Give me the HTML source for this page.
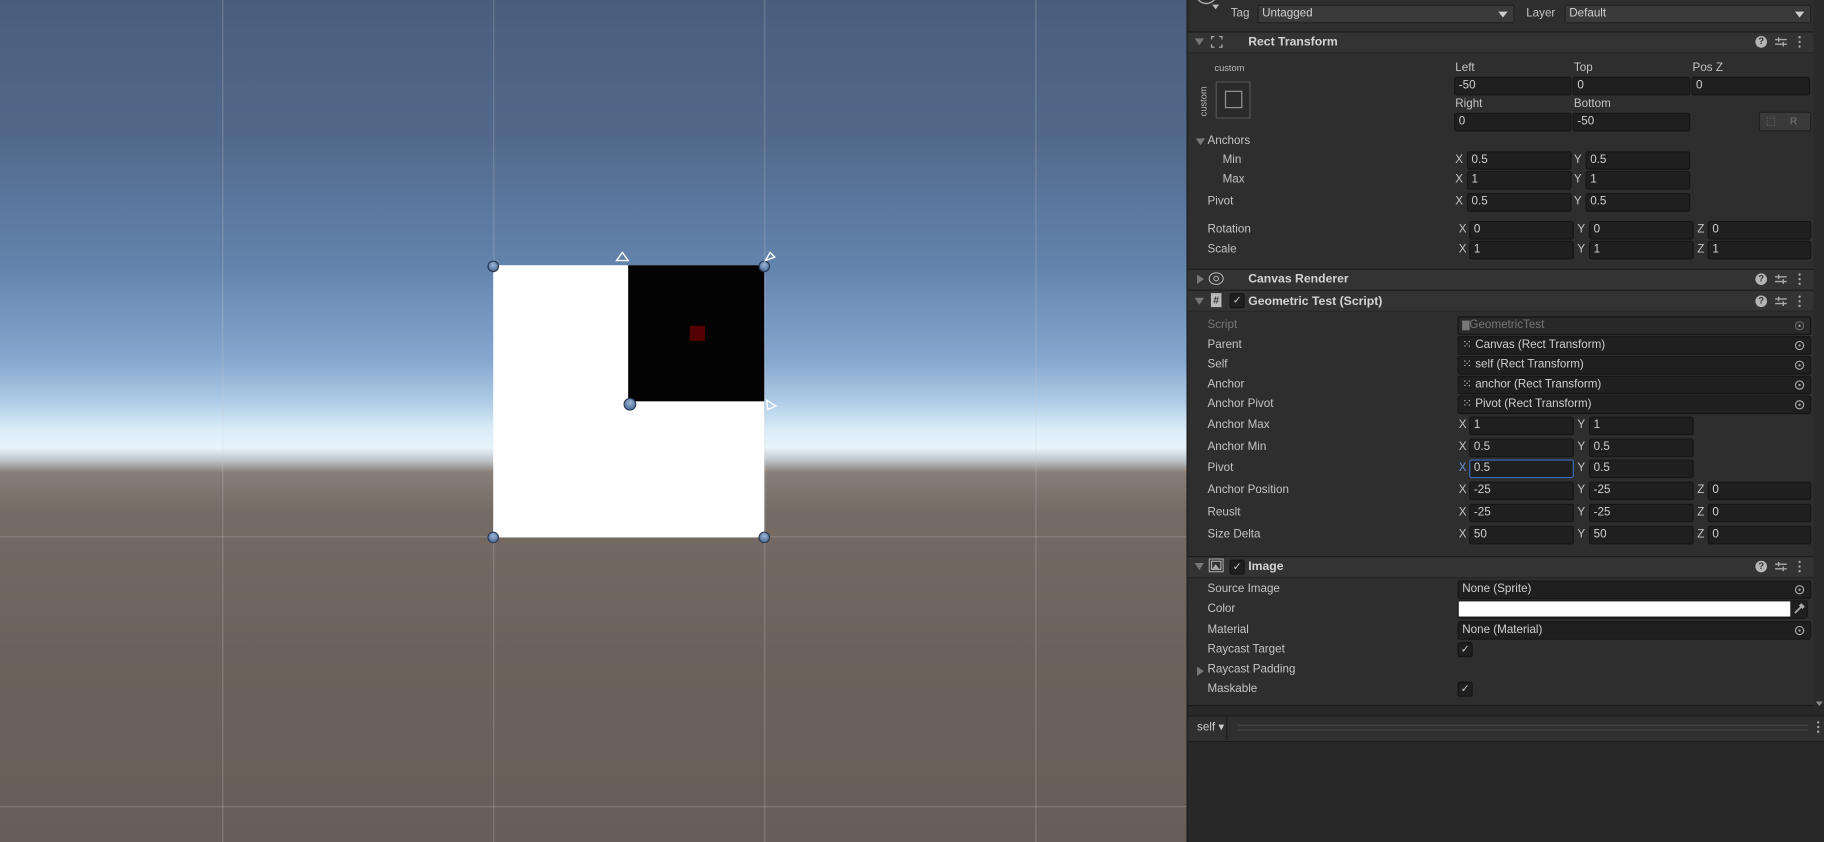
<!DOCTYPE html>
<html><head><meta charset="utf-8"><style>
html,body{margin:0;padding:0;width:1824px;height:842px;overflow:hidden;background:#282828}
#w{position:absolute;left:0;top:0;width:1568px;height:724px;transform:scale(1.16327);transform-origin:0 0;font-family:"Liberation Sans",sans-serif;font-size:10px;color:#c4c4c4}
.a{position:absolute}
.sky{left:0;top:0;width:1020px;height:724px;background:linear-gradient(#4a5d7d 0px,#52698b 120px,#6384ad 230px,#86a8cf 310px,#aecbe6 345px,#dceef9 370px,#e8f3fb 385px,#bcc4c9 396px,#8a7f78 406px,#766b64 440px,#6d625b 560px,#695e57 724px)}
.vl{width:1px;top:0;height:724px;background:rgba(200,200,200,.28)}
.hl{height:1px;left:0;width:1020px;background:rgba(200,200,200,.28)}
.h{border-radius:50%;width:8px;height:8px;background:radial-gradient(circle at 50% 35%,#9cb6d8,#3b5b86);border:1px solid #2a3a55;margin:-5px 0 0 -5px}
.ins{left:1020px;top:0;width:548px;height:724px;background:#282828;border-left:1px solid #1a1a1a}
.pan{left:1021px;top:0;width:538px;height:606px;background:#2e2e2e}
.hd{left:1021px;width:538px;height:17px;background:#333;border-top:1px solid #1c1c1c;border-bottom:1px solid #262626}
.ht{font-weight:bold;color:#d4d4d4;font-size:10.5px;line-height:14px}
.l{line-height:14px}
.f{height:14px;background:#1f1f1f;border:1px solid #161616;border-radius:2px;color:#d0d0d0;line-height:14px;padding-left:3px;box-sizing:content-box}
.tg{width:8px;height:8px;border:1.5px solid #aaa;border-radius:50%;box-sizing:border-box}
.tg:after{content:"";position:absolute;left:1.5px;top:1.5px;width:2px;height:2px;background:#aaa;border-radius:50%}
.cb{width:11px;height:11px;background:#1f1f1f;border:1px solid #141414;border-radius:2px;color:#ccc;font-size:9px;line-height:11px;text-align:center}
.tri{width:0;height:0;border-left:4px solid transparent;border-right:4px solid transparent;border-top:6px solid #777}
.trr{width:0;height:0;border-top:4px solid transparent;border-bottom:4px solid transparent;border-left:6px solid #777}
.q{width:10px;height:10px;border-radius:50%;background:#b4b4b4;color:#333;font-size:8px;font-weight:bold;line-height:10px;text-align:center}
</style></head><body><div id="w">
<div class="a sky"></div>
<div class="a vl" style="left:191px"></div><div class="a vl" style="left:424px"></div><div class="a vl" style="left:657px"></div><div class="a vl" style="left:890px"></div>
<div class="a hl" style="top:461px"></div><div class="a hl" style="top:693px"></div>
<div class="a" style="left:424px;top:228px;width:233px;height:234px;background:#fff"></div>
<div class="a" style="left:540px;top:228px;width:117px;height:117px;background:#030303"></div>
<div class="a" style="left:593px;top:280px;width:13px;height:13px;background:#540000"></div>
<div class="a h" style="left:424px;top:229px"></div><div class="a h" style="left:657px;top:229px"></div>
<div class="a h" style="left:424px;top:462px"></div><div class="a h" style="left:657px;top:462px"></div>
<div class="a h" style="left:541px;top:347px;width:9px;height:9px"></div>
<svg class="a" style="left:528px;top:215px" width="14" height="12"><path d="M2 9 L7 2 L12 9 Z" fill="none" stroke="#fff" stroke-width="1.2"/></svg>
<svg class="a" style="left:655px;top:215px" width="14" height="14"><path d="M3 9 L7 2 L11 6 Z" fill="none" stroke="#fff" stroke-width="1.2"/></svg>
<svg class="a" style="left:656px;top:341px" width="14" height="14"><path d="M3 3 L11 8 L4 11 Z" fill="none" stroke="#fff" stroke-width="1.2"/></svg>

<div class="a ins"></div>
<div class="a pan"></div>
<div class="a" style="left:1559px;top:0;width:9px;height:606px;background:#2a2a2a"></div>
<div class="a" style="left:1561px;top:603px;border-left:3px solid transparent;border-right:3px solid transparent;border-top:4px solid #888"></div>
<svg class="a" style="left:1028px;top:0" width="26" height="10"><path d="M2 0 Q9 6 16 0" fill="none" stroke="#aaa" stroke-width="1.2"/><path d="M14 4 L20 4 L17 8 Z" fill="#bbb"/></svg>
<!-- tag row -->
<div class="a l" style="left:1058px;top:5px">Tag</div>
<div class="a f" style="left:1081px;top:4px;width:216px;background:#3a3a3a;border-color:#222">Untagged</div>
<div class="a" style="left:1288px;top:10px;border-left:4px solid transparent;border-right:4px solid transparent;border-top:5px solid #ccc"></div>
<div class="a l" style="left:1312px;top:5px">Layer</div>
<div class="a f" style="left:1345px;top:4px;width:207px;background:#3a3a3a;border-color:#222">Default</div>
<div class="a" style="left:1543px;top:10px;border-left:4px solid transparent;border-right:4px solid transparent;border-top:5px solid #ccc"></div>

<!-- Rect transform header -->
<div class="a hd" style="top:27px"></div>
<div class="a tri" style="left:1027px;top:33px"></div>
<svg class="a" style="left:1040px;top:30px" width="12" height="12"><path d="M1 1h3v1H2v2H1zM11 1H8v1h2v2h1zM1 11h3v-1H2V8H1zM11 11H8v-1h2V8h1z" fill="#aaa"/></svg>
<div class="a ht" style="left:1073px;top:29px">Rect Transform</div>

<div class="a" style="left:1044px;top:54px;font-size:8px;color:#bbb">custom</div>
<div class="a" style="left:1030px;top:100px;font-size:8px;color:#bbb;transform:rotate(-90deg);transform-origin:0 0">custom</div>
<div class="a" style="left:1045px;top:70px;width:28px;height:30px;border:1px solid #555;background:#2a2a2a"></div>
<div class="a" style="left:1053px;top:78px;width:13px;height:13px;border:1px solid #999"></div>

<div class="a l" style="left:1251px;top:52px">Left</div><div class="a l" style="left:1353px;top:52px">Top</div><div class="a l" style="left:1455px;top:52px">Pos Z</div>
<div class="a f" style="left:1250px;top:66px;width:96px">-50</div><div class="a f" style="left:1352px;top:66px;width:96px">0</div><div class="a f" style="left:1454px;top:66px;width:97px">0</div>
<div class="a l" style="left:1251px;top:83px">Right</div><div class="a l" style="left:1353px;top:83px">Bottom</div>
<div class="a f" style="left:1250px;top:97px;width:96px">0</div><div class="a f" style="left:1352px;top:97px;width:96px">-50</div>
<div class="a" style="left:1512px;top:96px;width:43px;height:15px;background:#3a3a3a;border:1px solid #222;border-radius:2px;color:#777;font-size:9px;line-height:15px"><span style="margin-left:5px">⬚</span><span style="margin-left:12px">R</span></div>

<div class="a tri" style="left:1028px;top:119px"></div>
<div class="a l" style="left:1038px;top:115px">Anchors</div>
<div class="a l" style="left:1051px;top:131px">Min</div><div class="a l" style="left:1051px;top:148px">Max</div><div class="a l" style="left:1038px;top:167px">Pivot</div>
<div class="a l" style="left:1251px;top:131px">X</div><div class="a f" style="left:1261px;top:130px;width:85px">0.5</div><div class="a l" style="left:1353px;top:131px">Y</div><div class="a f" style="left:1363px;top:130px;width:85px">0.5</div>
<div class="a l" style="left:1251px;top:148px">X</div><div class="a f" style="left:1261px;top:147px;width:85px">1</div><div class="a l" style="left:1353px;top:148px">Y</div><div class="a f" style="left:1363px;top:147px;width:85px">1</div>
<div class="a l" style="left:1251px;top:167px">X</div><div class="a f" style="left:1261px;top:166px;width:85px">0.5</div><div class="a l" style="left:1353px;top:167px">Y</div><div class="a f" style="left:1363px;top:166px;width:85px">0.5</div>

<div class="a l" style="left:1038px;top:191px">Rotation</div><div class="a l" style="left:1038px;top:208px">Scale</div>
<div class="a l" style="left:1254px;top:191px">X</div><div class="a f" style="left:1263px;top:190px;width:85px">0</div><div class="a l" style="left:1356px;top:191px">Y</div><div class="a f" style="left:1366px;top:190px;width:85px">0</div><div class="a l" style="left:1459px;top:191px">Z</div><div class="a f" style="left:1468px;top:190px;width:84px">0</div>
<div class="a l" style="left:1254px;top:208px">X</div><div class="a f" style="left:1263px;top:207px;width:85px">1</div><div class="a l" style="left:1356px;top:208px">Y</div><div class="a f" style="left:1366px;top:207px;width:85px">1</div><div class="a l" style="left:1459px;top:208px">Z</div><div class="a f" style="left:1468px;top:207px;width:84px">1</div>

<!-- Canvas renderer -->
<div class="a hd" style="top:231px"></div>
<div class="a trr" style="left:1029px;top:236px"></div>
<div class="a" style="left:1039px;top:234px;width:13px;height:11px;border:1.5px solid #aaa;border-radius:50%;box-sizing:border-box"></div>
<div class="a" style="left:1043px;top:237px;width:5px;height:5px;border:1px solid #aaa;border-radius:50%;box-sizing:border-box"></div>
<div class="a ht" style="left:1073px;top:233px">Canvas Renderer</div>

<!-- Geometric test -->
<div class="a hd" style="top:249px"></div>
<div class="a tri" style="left:1027px;top:256px"></div>
<div class="a" style="left:1041px;top:252px;width:9px;height:12px;background:#bbb;color:#333;font-size:9px;line-height:12px;text-align:center;font-weight:bold">#</div>
<div class="a cb" style="left:1057px;top:252px">✓</div>
<div class="a ht" style="left:1073px;top:252px">Geometric Test (Script)</div>

<div class="a l" style="left:1038px;top:273px;color:#777">Script</div>
<div class="a f" style="left:1253px;top:272px;width:299px;color:#777;background:#292929"><span style="font-size:8px">▇</span>GeometricTest</div>
<div class="a tg" style="left:1543px;top:276px;border-color:#666"></div>
<div class="a l" style="left:1038px;top:290px">Parent</div><div class="a f" style="left:1253px;top:289px;width:299px">⁙ Canvas (Rect Transform)</div><div class="a tg" style="left:1543px;top:293px"></div>
<div class="a l" style="left:1038px;top:307px">Self</div><div class="a f" style="left:1253px;top:306px;width:299px">⁙ self (Rect Transform)</div><div class="a tg" style="left:1543px;top:310px"></div>
<div class="a l" style="left:1038px;top:324px">Anchor</div><div class="a f" style="left:1253px;top:323px;width:299px">⁙ anchor (Rect Transform)</div><div class="a tg" style="left:1543px;top:327px"></div>
<div class="a l" style="left:1038px;top:341px">Anchor Pivot</div><div class="a f" style="left:1253px;top:340px;width:299px">⁙ Pivot (Rect Transform)</div><div class="a tg" style="left:1543px;top:344px"></div>

<div class="a l" style="left:1038px;top:359px">Anchor Max</div>
<div class="a l" style="left:1254px;top:359px">X</div><div class="a f" style="left:1263px;top:358px;width:85px">1</div><div class="a l" style="left:1356px;top:359px">Y</div><div class="a f" style="left:1366px;top:358px;width:85px">1</div>
<div class="a l" style="left:1038px;top:378px">Anchor Min</div>
<div class="a l" style="left:1254px;top:378px">X</div><div class="a f" style="left:1263px;top:377px;width:85px">0.5</div><div class="a l" style="left:1356px;top:378px">Y</div><div class="a f" style="left:1366px;top:377px;width:85px">0.5</div>
<div class="a l" style="left:1038px;top:396px">Pivot</div>
<div class="a l" style="left:1254px;top:396px;color:#6a8fd0">X</div><div class="a f" style="left:1263px;top:395px;width:85px;border-color:#3d6bb8">0.5</div><div class="a l" style="left:1356px;top:396px">Y</div><div class="a f" style="left:1366px;top:395px;width:85px">0.5</div>
<div class="a l" style="left:1038px;top:415px">Anchor Position</div>
<div class="a l" style="left:1254px;top:415px">X</div><div class="a f" style="left:1263px;top:414px;width:85px">-25</div><div class="a l" style="left:1356px;top:415px">Y</div><div class="a f" style="left:1366px;top:414px;width:85px">-25</div><div class="a l" style="left:1459px;top:415px">Z</div><div class="a f" style="left:1468px;top:414px;width:84px">0</div>
<div class="a l" style="left:1038px;top:434px">Reuslt</div>
<div class="a l" style="left:1254px;top:434px">X</div><div class="a f" style="left:1263px;top:433px;width:85px">-25</div><div class="a l" style="left:1356px;top:434px">Y</div><div class="a f" style="left:1366px;top:433px;width:85px">-25</div><div class="a l" style="left:1459px;top:434px">Z</div><div class="a f" style="left:1468px;top:433px;width:84px">0</div>
<div class="a l" style="left:1038px;top:453px">Size Delta</div>
<div class="a l" style="left:1254px;top:453px">X</div><div class="a f" style="left:1263px;top:452px;width:85px">50</div><div class="a l" style="left:1356px;top:453px">Y</div><div class="a f" style="left:1366px;top:452px;width:85px">50</div><div class="a l" style="left:1459px;top:453px">Z</div><div class="a f" style="left:1468px;top:452px;width:84px">0</div>

<!-- Image -->
<div class="a hd" style="top:478px"></div>
<div class="a tri" style="left:1027px;top:484px"></div>
<svg class="a" style="left:1039px;top:480px" width="13" height="12"><rect x="0.5" y="0.5" width="12" height="11" fill="none" stroke="#aaa"/><rect x="2.5" y="2.5" width="8" height="7" fill="none" stroke="#aaa"/><path d="M3 9 L6 5 L9 9Z" fill="#aaa"/></svg>
<div class="a cb" style="left:1057px;top:481px">✓</div>
<div class="a ht" style="left:1073px;top:480px">Image</div>

<div class="a l" style="left:1038px;top:500px">Source Image</div><div class="a f" style="left:1253px;top:499px;width:299px">None (Sprite)</div><div class="a tg" style="left:1543px;top:503px"></div>
<div class="a l" style="left:1038px;top:517px">Color</div><div class="a f" style="left:1253px;top:516px;width:299px;padding:0"></div><div class="a" style="left:1254px;top:517px;width:285px;height:13px;background:#fff"></div>
<svg class="a" style="left:1542px;top:518px" width="10" height="10"><path d="M1 9 L6 4 M5 2 L8 5 M6 1 L9 4" stroke="#aaa" stroke-width="1.5"/></svg>
<div class="a l" style="left:1038px;top:535px">Material</div><div class="a f" style="left:1253px;top:534px;width:299px">None (Material)</div><div class="a tg" style="left:1543px;top:538px"></div>
<div class="a l" style="left:1038px;top:552px">Raycast Target</div><div class="a cb" style="left:1253px;top:552px">✓</div>
<div class="a trr" style="left:1029px;top:573px"></div>
<div class="a l" style="left:1038px;top:569px">Raycast Padding</div>
<div class="a l" style="left:1038px;top:586px">Maskable</div><div class="a cb" style="left:1253px;top:586px">✓</div>

<!-- header icons -->
<div class="a q" style="left:1509px;top:31px">?</div><div class="a q" style="left:1509px;top:235px">?</div><div class="a q" style="left:1509px;top:254px">?</div><div class="a q" style="left:1509px;top:482px">?</div>
<svg class="a" style="left:1525px;top:30px" width="12" height="12"><path d="M1 4h10M1 8h10M4 2v4M8 6v4" stroke="#aaa" stroke-width="1.2"/></svg>
<svg class="a" style="left:1525px;top:234px" width="12" height="12"><path d="M1 4h10M1 8h10M4 2v4M8 6v4" stroke="#aaa" stroke-width="1.2"/></svg>
<svg class="a" style="left:1525px;top:253px" width="12" height="12"><path d="M1 4h10M1 8h10M4 2v4M8 6v4" stroke="#aaa" stroke-width="1.2"/></svg>
<svg class="a" style="left:1525px;top:481px" width="12" height="12"><path d="M1 4h10M1 8h10M4 2v4M8 6v4" stroke="#aaa" stroke-width="1.2"/></svg>
<svg class="a" style="left:1545px;top:30px" width="4" height="12"><circle cx="2" cy="2" r="1" fill="#aaa"/><circle cx="2" cy="6" r="1" fill="#aaa"/><circle cx="2" cy="10" r="1" fill="#aaa"/></svg>
<svg class="a" style="left:1545px;top:234px" width="4" height="12"><circle cx="2" cy="2" r="1" fill="#aaa"/><circle cx="2" cy="6" r="1" fill="#aaa"/><circle cx="2" cy="10" r="1" fill="#aaa"/></svg>
<svg class="a" style="left:1545px;top:253px" width="4" height="12"><circle cx="2" cy="2" r="1" fill="#aaa"/><circle cx="2" cy="6" r="1" fill="#aaa"/><circle cx="2" cy="10" r="1" fill="#aaa"/></svg>
<svg class="a" style="left:1545px;top:481px" width="4" height="12"><circle cx="2" cy="2" r="1" fill="#aaa"/><circle cx="2" cy="6" r="1" fill="#aaa"/><circle cx="2" cy="10" r="1" fill="#aaa"/></svg>

<div class="a" style="left:1021px;top:606px;width:538px;height:1px;background:#1a1a1a"></div>
<div class="a" style="left:1021px;top:615px;width:547px;height:21px;background:#2f2f2f;border-top:1px solid #1d1d1d;border-bottom:1px solid #1d1d1d"></div>
<div class="a l" style="left:1029px;top:619px;color:#ccc">self ▾</div>
<div class="a" style="left:1054px;top:616px;width:1px;height:20px;background:#1d1d1d"></div>
<div class="a" style="left:1064px;top:623px;width:490px;height:3px;border-top:1px solid #444;border-bottom:1px solid #444"></div>
<svg class="a" style="left:1561px;top:619px" width="4" height="12"><circle cx="2" cy="2" r="1" fill="#aaa"/><circle cx="2" cy="6" r="1" fill="#aaa"/><circle cx="2" cy="10" r="1" fill="#aaa"/></svg>
</div></body></html>
